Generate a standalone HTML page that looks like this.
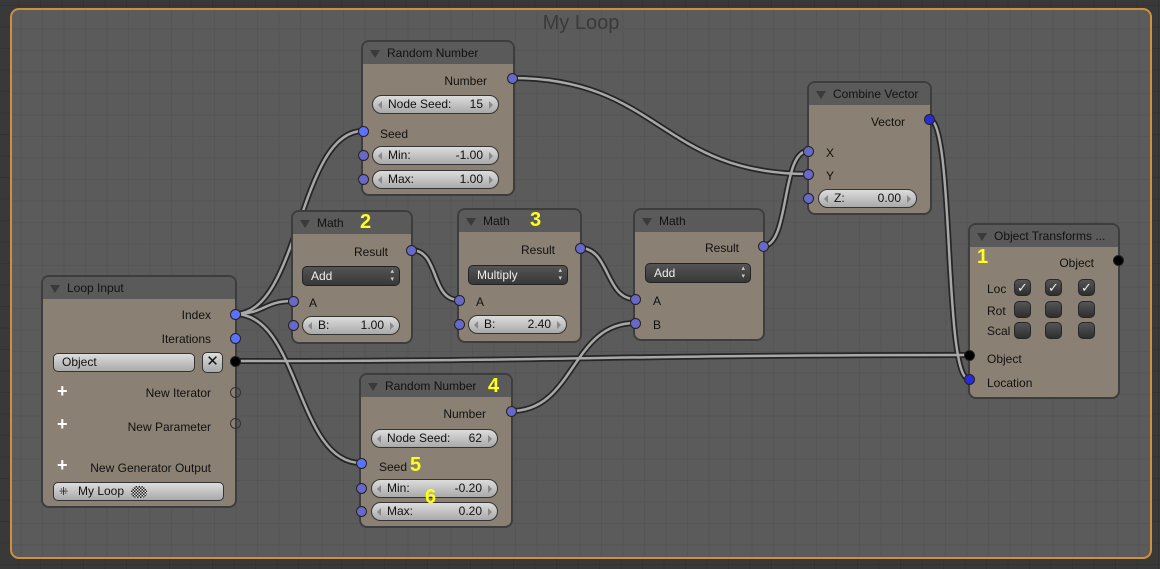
<!DOCTYPE html>
<html><head><meta charset="utf-8"><style>
*{margin:0;padding:0;box-sizing:border-box}
body{width:1160px;height:569px;overflow:hidden;background:#393939;font-family:"Liberation Sans","DejaVu Sans",sans-serif;font-size:12px;color:#111;position:relative;
background-image:linear-gradient(#333 1px,transparent 1px),linear-gradient(90deg,#333 1px,transparent 1px);background-size:21.5px 21.5px;background-position:-3px 5px}
.frame{position:absolute;left:10px;top:8px;width:1142px;height:551px;border:2px solid #d08f3c;border-radius:9px;background:#5b5b5b;
background-image:linear-gradient(#565656 1px,transparent 1px),linear-gradient(90deg,#565656 1px,transparent 1px);background-size:21.5px 21.5px;background-position:-13px -3px}
.ftitle{position:absolute;left:0;width:1162px;top:12px;text-align:center;font-size:20px;color:#3a3a3a}
.node{position:absolute;border:2px solid #3d3d3d;border-radius:8px;background:#8a8073;overflow:hidden}
.hd{height:22px;background:#5a5a5a;color:#111;padding-left:24px;line-height:23px;position:relative;font-size:12px}
.hd:before{content:"";position:absolute;left:7px;top:8px;border-left:5px solid transparent;border-right:5px solid transparent;border-top:8px solid #3a3a3a}
.t{position:absolute;white-space:nowrap}
.f{position:absolute;height:19px;border:1px solid #333;border-radius:10px;background:linear-gradient(#dcdcdc,#a9a9a9);font-size:12px;line-height:17px;color:#111}
.f .l{position:absolute;left:15px}.f .v{position:absolute;right:15px}
.f:before{content:"";position:absolute;left:5px;top:5px;border-top:4px solid transparent;border-bottom:4px solid transparent;border-right:4px solid #888}
.f:after{content:"";position:absolute;right:5px;top:5px;border-top:4px solid transparent;border-bottom:4px solid transparent;border-left:4px solid #888}
.f.nx:before,.f.nx:after{display:none}
.dd{position:absolute;height:20px;border:1px solid #222;border-radius:5px;background:linear-gradient(#545454,#383838);color:#eee;line-height:18px;padding-left:8px}
.dd:after{content:"▴\A▾";white-space:pre;position:absolute;right:5px;top:1px;font-size:7px;line-height:8px;color:#ccc}
.s{position:absolute;width:11px;height:11px;border-radius:50%;border:1px solid #222;background:#6868c8;margin:-5.5px 0 0 -5.5px}
.s.b{background:#5b72ff}.s.k{background:#000}.s.h{background:transparent;border-color:#333}.s.v{background:#2a2ad8}
.y{position:absolute;color:#ffff1a;font-size:20px;font-weight:bold}
.cb{position:absolute;width:17px;height:17px;border-radius:5px;background:linear-gradient(#555,#2e2e2e);border:1px solid #262626;color:#eee;font-size:13px;line-height:15px;text-align:center}
.plus{position:absolute;color:#fff;font-size:18px;font-weight:bold}
</style></head><body>
<div class="frame"></div>
<div class="ftitle">My Loop</div>

<svg width="1160" height="569" style="position:absolute;left:0;top:0">
<g fill="none" stroke="#262626" stroke-width="6">
<path d="M235 314 C265 314,263 301,293 301"/>
<path d="M235 314 C300 314,298 131,363 131"/>
<path d="M235 314 C300 314,296 463,361 463"/>
<path d="M235 361 C600 361,600 355,969 355"/>
<path d="M512 78 C660 78,660 174,808 174"/>
<path d="M411 250 C440 250,430 300,459 300"/>
<path d="M580 248 C610 248,605 299,635 299"/>
<path d="M763 246 C790 246,781 151,808 151"/>
<path d="M511 411 C575 411,571 323,635 323"/>
<path d="M929 119 C955 119,943 379,969 379"/>
</g>
<g fill="none" stroke="#a8a8a8" stroke-width="2.5">
<path d="M235 314 C265 314,263 301,293 301"/>
<path d="M235 314 C300 314,298 131,363 131"/>
<path d="M235 314 C300 314,296 463,361 463"/>
<path d="M235 361 C600 361,600 355,969 355"/>
<path d="M512 78 C660 78,660 174,808 174"/>
<path d="M411 250 C440 250,430 300,459 300"/>
<path d="M580 248 C610 248,605 299,635 299"/>
<path d="M763 246 C790 246,781 151,808 151"/>
<path d="M511 411 C575 411,571 323,635 323"/>
<path d="M929 119 C955 119,943 379,969 379"/>
</g>
</svg>

<!-- Loop Input -->
<div class="node" style="left:41px;top:275px;width:196px;height:233px"><div class="hd">Loop Input</div></div>
<div class="t" style="right:949px;top:308px">Index</div>
<div class="t" style="right:949px;top:332px">Iterations</div>
<div class="f nx" style="left:53px;top:353px;width:142px;border-radius:5px"><span class="l" style="left:8px">Object</span></div>
<div class="f nx" style="left:202px;top:352px;width:21px;height:21px;border-radius:5px;text-align:center;font-size:15px;line-height:18px">✕</div>
<div class="plus" style="left:57px;top:381px">+</div><div class="t" style="right:949px;top:386px">New Iterator</div>
<div class="plus" style="left:57px;top:414px">+</div><div class="t" style="right:949px;top:420px">New Parameter</div>
<div class="plus" style="left:57px;top:455px">+</div><div class="t" style="right:949px;top:461px">New Generator Output</div>
<div class="f nx" style="left:53px;top:482px;width:171px;border-radius:5px"><span class="l" style="left:24px">My Loop</span><span style="position:absolute;left:5px;top:1px;font-size:11px;color:#222">⁜</span><span style="position:absolute;left:77px;top:3px;width:16px;height:12px;border-radius:6px;background:repeating-conic-gradient(#222 0 25%,#ddd 0 50%) 0 0/3px 3px"></span></div>

<!-- RN1 -->
<div class="node" style="left:361px;top:40px;width:154px;height:156px"><div class="hd">Random Number</div></div>
<div class="t" style="right:673px;top:74px">Number</div>
<div class="f" style="left:372px;top:95px;width:127px"><span class="l">Node Seed:</span><span class="v">15</span></div>
<div class="t" style="left:380px;top:127px">Seed</div>
<div class="f" style="left:372px;top:146px;width:127px"><span class="l">Min:</span><span class="v">-1.00</span></div>
<div class="f" style="left:372px;top:170px;width:127px"><span class="l">Max:</span><span class="v">1.00</span></div>

<!-- Math2 -->
<div class="node" style="left:291px;top:210px;width:122px;height:134px"><div class="hd">Math</div></div>
<div class="t" style="right:772px;top:245px">Result</div>
<div class="dd" style="left:302px;top:266px;width:98px">Add</div>
<div class="t" style="left:309px;top:296px">A</div>
<div class="f" style="left:302px;top:316px;width:98px"><span class="l">B:</span><span class="v">1.00</span></div>

<!-- Math3 -->
<div class="node" style="left:457px;top:208px;width:125px;height:135px"><div class="hd">Math</div></div>
<div class="t" style="right:605px;top:243px">Result</div>
<div class="dd" style="left:468px;top:265px;width:100px">Multiply</div>
<div class="t" style="left:476px;top:295px">A</div>
<div class="f" style="left:468px;top:315px;width:99px"><span class="l">B:</span><span class="v">2.40</span></div>

<!-- Math4 -->
<div class="node" style="left:633px;top:208px;width:132px;height:133px"><div class="hd">Math</div></div>
<div class="t" style="right:421px;top:241px">Result</div>
<div class="dd" style="left:645px;top:263px;width:106px">Add</div>
<div class="t" style="left:653px;top:294px">A</div>
<div class="t" style="left:653px;top:318px">B</div>

<!-- Combine Vector -->
<div class="node" style="left:807px;top:81px;width:125px;height:134px"><div class="hd">Combine Vector</div></div>
<div class="t" style="right:255px;top:115px">Vector</div>
<div class="t" style="left:826px;top:146px">X</div>
<div class="t" style="left:826px;top:169px">Y</div>
<div class="f" style="left:818px;top:189px;width:99px"><span class="l">Z:</span><span class="v">0.00</span></div>

<!-- Object Transforms -->
<div class="node" style="left:968px;top:223px;width:152px;height:176px"><div class="hd">Object Transforms ...</div></div>
<div class="t" style="right:66px;top:256px">Object</div>
<div class="t" style="left:987px;top:282px">Loc</div><div class="t" style="left:987px;top:304px">Rot</div><div class="t" style="left:987px;top:324px">Scal</div>
<div class="cb" style="left:1014px;top:279px">✓</div><div class="cb" style="left:1045px;top:279px">✓</div><div class="cb" style="left:1078px;top:279px">✓</div>
<div class="cb" style="left:1014px;top:301px"></div><div class="cb" style="left:1045px;top:301px"></div><div class="cb" style="left:1078px;top:301px"></div>
<div class="cb" style="left:1014px;top:322px"></div><div class="cb" style="left:1045px;top:322px"></div><div class="cb" style="left:1078px;top:322px"></div>
<div class="t" style="left:987px;top:352px">Object</div>
<div class="t" style="left:987px;top:376px">Location</div>

<!-- RN2 -->
<div class="node" style="left:359px;top:373px;width:154px;height:155px"><div class="hd">Random Number</div></div>
<div class="t" style="right:674px;top:407px">Number</div>
<div class="f" style="left:371px;top:429px;width:127px"><span class="l">Node Seed:</span><span class="v">62</span></div>
<div class="t" style="left:379px;top:460px">Seed</div>
<div class="f" style="left:371px;top:479px;width:127px"><span class="l">Min:</span><span class="v">-0.20</span></div>
<div class="f" style="left:371px;top:502px;width:127px"><span class="l">Max:</span><span class="v">0.20</span></div>

<!-- sockets -->
<div class="s b" style="left:235px;top:314px"></div><div class="s b" style="left:235px;top:338px"></div>
<div class="s k" style="left:235px;top:361px"></div><div class="s h" style="left:235px;top:392px"></div><div class="s h" style="left:235px;top:423px"></div>
<div class="s" style="left:512px;top:78px"></div><div class="s b" style="left:363px;top:131px"></div><div class="s" style="left:363px;top:155px"></div><div class="s" style="left:363px;top:179px"></div>
<div class="s" style="left:411px;top:250px"></div><div class="s" style="left:293px;top:301px"></div><div class="s" style="left:293px;top:325px"></div>
<div class="s" style="left:580px;top:248px"></div><div class="s" style="left:459px;top:300px"></div><div class="s" style="left:459px;top:324px"></div>
<div class="s" style="left:763px;top:246px"></div><div class="s" style="left:635px;top:299px"></div><div class="s" style="left:635px;top:323px"></div>
<div class="s v" style="left:929px;top:119px"></div><div class="s" style="left:808px;top:151px"></div><div class="s" style="left:808px;top:174px"></div><div class="s" style="left:808px;top:198px"></div>
<div class="s k" style="left:1118px;top:260px"></div><div class="s k" style="left:969px;top:355px"></div><div class="s v" style="left:969px;top:379px"></div>
<div class="s" style="left:511px;top:411px"></div><div class="s b" style="left:361px;top:463px"></div><div class="s" style="left:361px;top:488px"></div><div class="s" style="left:361px;top:511px"></div>

<div class="y" style="left:977px;top:246px">1</div>
<div class="y" style="left:360px;top:211px">2</div>
<div class="y" style="left:530px;top:209px">3</div>
<div class="y" style="left:488px;top:375px">4</div>
<div class="y" style="left:410px;top:454px">5</div>
<div class="y" style="left:425px;top:486px">6</div>
</body></html>
